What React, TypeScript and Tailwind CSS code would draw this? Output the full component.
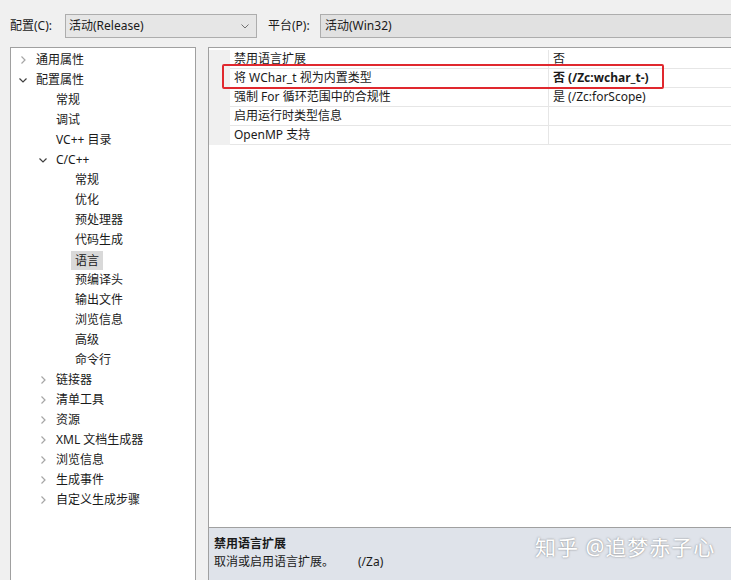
import React from 'react';

const FONT = { fontFamily: '"Noto Sans", "Noto Sans CJK SC", sans-serif' };

type Node = { label: string; level: number; chevron?: 'open' | 'closed'; selected?: boolean };

const tree: Node[] = [
  { label: '通用属性', level: 0, chevron: 'closed' },
  { label: '配置属性', level: 0, chevron: 'open' },
  { label: '常规', level: 1 },
  { label: '调试', level: 1 },
  { label: 'VC++ 目录', level: 1 },
  { label: 'C/C++', level: 1, chevron: 'open' },
  { label: '常规', level: 2 },
  { label: '优化', level: 2 },
  { label: '预处理器', level: 2 },
  { label: '代码生成', level: 2 },
  { label: '语言', level: 2, selected: true },
  { label: '预编译头', level: 2 },
  { label: '输出文件', level: 2 },
  { label: '浏览信息', level: 2 },
  { label: '高级', level: 2 },
  { label: '命令行', level: 2 },
  { label: '链接器', level: 1, chevron: 'closed' },
  { label: '清单工具', level: 1, chevron: 'closed' },
  { label: '资源', level: 1, chevron: 'closed' },
  { label: 'XML 文档生成器', level: 1, chevron: 'closed' },
  { label: '浏览信息', level: 1, chevron: 'closed' },
  { label: '生成事件', level: 1, chevron: 'closed' },
  { label: '自定义生成步骤', level: 1, chevron: 'closed' },
];

const rows = [
  { name: '禁用语言扩展', value: '否' },
  { name: '将 WChar_t 视为内置类型', value: '否 (/Zc:wchar_t-)', bold: true },
  { name: '强制 For 循环范围中的合规性', value: '是 (/Zc:forScope)' },
  { name: '启用运行时类型信息', value: '' },
  { name: 'OpenMP 支持', value: '' },
];

const Chevron = ({ open }: { open: boolean }) =>
  open ? (
    <svg width="10" height="10" viewBox="0 0 10 10" className="shrink-0">
      <polyline points="1.5,3.5 5,7 8.5,3.5" fill="none" stroke="#404040" strokeWidth="1.2" />
    </svg>
  ) : (
    <svg width="10" height="10" viewBox="0 0 10 10" className="shrink-0">
      <polyline points="3.5,1.5 7,5 3.5,8.5" fill="none" stroke="#a6a6a6" strokeWidth="1.2" />
    </svg>
  );

const indent = ['pl-[7px]', 'pl-[27px]', 'pl-[46px]'];

export default function App() {
  return (
    <div className="w-[731px] h-[580px] overflow-hidden bg-[#f0f0f0] text-[12px] text-[#1a1a1a]" style={FONT}>
      {/* top selectors */}
      <div className="flex items-center pt-[14px] pl-[10px] h-[38px]">
        <span className="w-[55px]">配置(C):</span>
        <div className="w-[192px] h-[24px] flex items-center justify-between border border-[#adadad] bg-[#e6e6e6] pl-[3px] pr-[6px]">
          <span>活动(Release)</span>
          <svg width="10" height="10" viewBox="0 0 10 10">
            <polyline points="1.5,3.5 5,7 8.5,3.5" fill="none" stroke="#707070" strokeWidth="1" />
          </svg>
        </div>
        <span className="ml-[11px] w-[52px]">平台(P):</span>
        <div className="flex-1 h-[24px] flex items-center border border-[#adadad] border-r-0 bg-[#e1e1e1] pl-[4px]">
          <span>活动(Win32)</span>
        </div>
      </div>

      <div className="flex gap-[12px] pl-[10px] mt-[9px] h-[540px]">
        {/* tree */}
        <div className="w-[186px] shrink-0 bg-white border border-[#a0a0a0] pt-[2px]">
          {tree.map((n, i) => (
            <div key={i} className={`flex items-center h-[20px] ${indent[n.level]}`}>
              <span className="w-[18px] flex items-center">
                {n.chevron && <Chevron open={n.chevron === 'open'} />}
              </span>
              <span className={n.selected ? 'bg-[#d9d9d9] px-[4px] -ml-[4px] leading-[19px]' : ''}>{n.label}</span>
            </div>
          ))}
        </div>

        {/* property grid */}
        <div className="flex-1 -mr-[2px] flex flex-col border border-[#a0a0a0] bg-white">
          <div className="relative flex-1 pt-[2px]">
            {rows.map((r, i) => (
              <div key={i} className="flex h-[19px]">
                <div className="w-[21px] shrink-0 bg-[#f0f0f0]" />
                <div className="w-[318px] shrink-0 flex items-center pl-[4px] border-b border-[#e6e6e6]">{r.name}</div>
                <div className={`flex-1 flex items-center pl-[4px] border-b border-l border-[#e6e6e6] ${r.bold ? 'font-bold' : ''}`}>
                  {r.value}
                </div>
              </div>
            ))}
            <div className="absolute left-[13px] top-[16px] w-[442px] h-[25px] border-2 border-[#e0282e] rounded-[2px]" />
          </div>
          <div className="h-[59px] border-t border-[#a0a0a0] bg-[#dfe3ea] pl-[5px] pt-[7px] relative">
            <div className="font-bold leading-[18px]">禁用语言扩展</div>
            <div className="leading-[18px]">
              取消或启用语言扩展。<span className="ml-[24px]">(/Za)</span>
            </div>
            <div className="absolute left-[326px] top-[4px] text-[21px] text-white tracking-[1px] [text-shadow:0_0_2px_rgba(80,80,80,0.7)]">
              知乎 @追梦赤子心
            </div>
          </div>
        </div>
      </div>
    </div>
  );
}
